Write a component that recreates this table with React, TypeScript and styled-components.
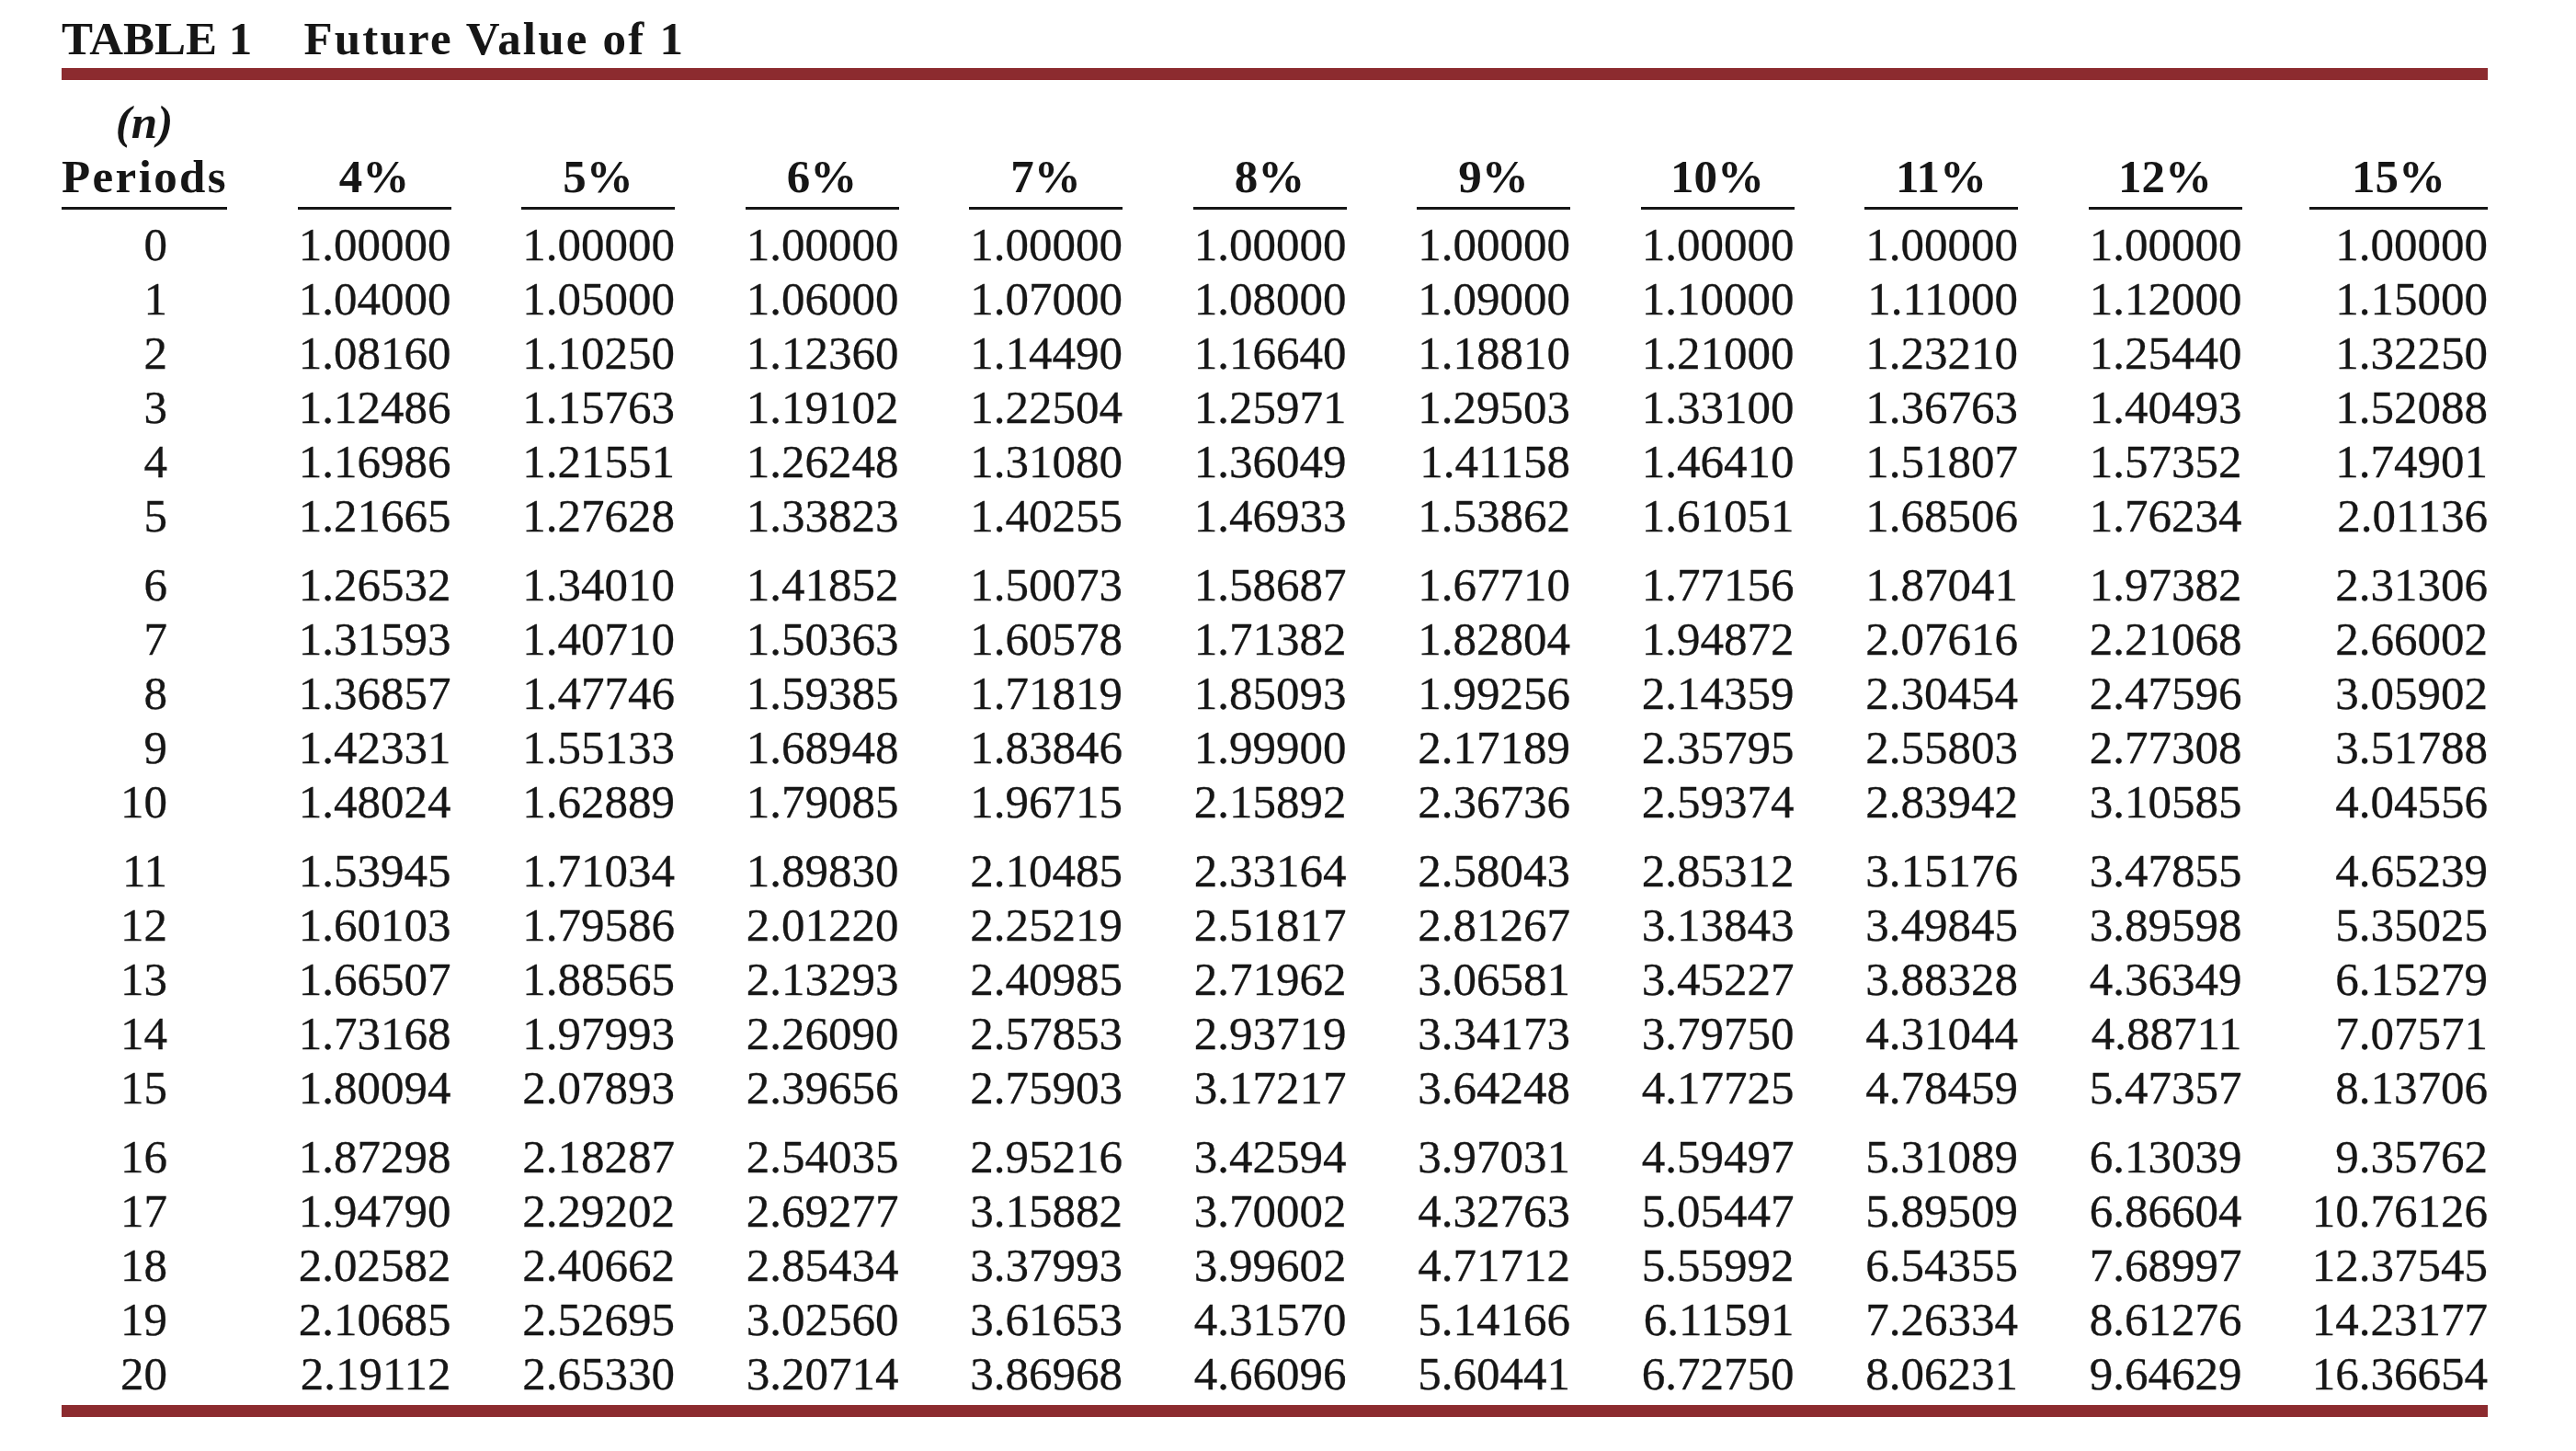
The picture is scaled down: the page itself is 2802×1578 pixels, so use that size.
import React from 'react';
import styled, { createGlobalStyle } from 'styled-components';

const GlobalStyle = createGlobalStyle`
  html, body {
    margin: 0;
    padding: 0;
    background: #ffffff;
  }
  body {
    font-family: 'Liberation Serif', 'Times New Roman', serif;
    color: #161616;
  }
`;

const COLUMNS = '180px repeat(9, 243.5px) 267.5px';

const Page = styled.div`
  width: 2802px;
  min-height: 1578px;
  box-sizing: border-box;
  padding: 13px 0 0 67px;
`;

const Sheet = styled.div`
  width: 2639px;
`;

const TitleLine = styled.h1`
  display: flex;
  gap: 56px;
  margin: 0;
  font-size: 51px;
  line-height: 59px;
  font-weight: 700;
`;

const TitleLabel = styled.span`
  letter-spacing: 0;
`;

const TitleText = styled.span`
  letter-spacing: 2.2px;
`;

const Rule = styled.div<{ $top: number }>`
  height: 13px;
  margin-top: ${(p) => p.$top}px;
  background: #8c2b2f;
`;

const HeaderRow = styled.div`
  display: grid;
  grid-template-columns: ${COLUMNS};
  align-items: end;
  margin: 17px 0 9px;
  font-size: 51px;
  line-height: 59px;
  font-weight: 700;
`;

const PeriodHead = styled.div`
  text-align: center;
  padding-bottom: 3px;
  border-bottom: 3px solid #161616;
`;

const NLabel = styled.div`
  font-style: italic;
`;

const PeriodsLabel = styled.div`
  letter-spacing: 2.4px;
`;

const RateCell = styled.div`
  display: flex;
  justify-content: flex-end;
`;

const RateLabel = styled.div<{ $wide?: boolean }>`
  width: ${(p) => (p.$wide ? 194 : 167)}px;
  text-align: center;
  padding-bottom: 3px;
  border-bottom: 3px solid #161616;
`;

const Row = styled.div<{ $groupStart?: boolean }>`
  display: grid;
  grid-template-columns: ${COLUMNS};
  margin-top: ${(p) => (p.$groupStart ? 16 : 0)}px;
  font-size: 51px;
  line-height: 59px;
  -webkit-text-stroke: 0.3px #161616;
`;

const Period = styled.div`
  text-align: right;
  padding-right: 65px;
`;

const Value = styled.div`
  text-align: right;
`;

const rates = ['4%', '5%', '6%', '7%', '8%', '9%', '10%', '11%', '12%', '15%'];

const values: string[][] = [
  ['1.00000', '1.00000', '1.00000', '1.00000', '1.00000', '1.00000', '1.00000', '1.00000', '1.00000', '1.00000'],
  ['1.04000', '1.05000', '1.06000', '1.07000', '1.08000', '1.09000', '1.10000', '1.11000', '1.12000', '1.15000'],
  ['1.08160', '1.10250', '1.12360', '1.14490', '1.16640', '1.18810', '1.21000', '1.23210', '1.25440', '1.32250'],
  ['1.12486', '1.15763', '1.19102', '1.22504', '1.25971', '1.29503', '1.33100', '1.36763', '1.40493', '1.52088'],
  ['1.16986', '1.21551', '1.26248', '1.31080', '1.36049', '1.41158', '1.46410', '1.51807', '1.57352', '1.74901'],
  ['1.21665', '1.27628', '1.33823', '1.40255', '1.46933', '1.53862', '1.61051', '1.68506', '1.76234', '2.01136'],
  ['1.26532', '1.34010', '1.41852', '1.50073', '1.58687', '1.67710', '1.77156', '1.87041', '1.97382', '2.31306'],
  ['1.31593', '1.40710', '1.50363', '1.60578', '1.71382', '1.82804', '1.94872', '2.07616', '2.21068', '2.66002'],
  ['1.36857', '1.47746', '1.59385', '1.71819', '1.85093', '1.99256', '2.14359', '2.30454', '2.47596', '3.05902'],
  ['1.42331', '1.55133', '1.68948', '1.83846', '1.99900', '2.17189', '2.35795', '2.55803', '2.77308', '3.51788'],
  ['1.48024', '1.62889', '1.79085', '1.96715', '2.15892', '2.36736', '2.59374', '2.83942', '3.10585', '4.04556'],
  ['1.53945', '1.71034', '1.89830', '2.10485', '2.33164', '2.58043', '2.85312', '3.15176', '3.47855', '4.65239'],
  ['1.60103', '1.79586', '2.01220', '2.25219', '2.51817', '2.81267', '3.13843', '3.49845', '3.89598', '5.35025'],
  ['1.66507', '1.88565', '2.13293', '2.40985', '2.71962', '3.06581', '3.45227', '3.88328', '4.36349', '6.15279'],
  ['1.73168', '1.97993', '2.26090', '2.57853', '2.93719', '3.34173', '3.79750', '4.31044', '4.88711', '7.07571'],
  ['1.80094', '2.07893', '2.39656', '2.75903', '3.17217', '3.64248', '4.17725', '4.78459', '5.47357', '8.13706'],
  ['1.87298', '2.18287', '2.54035', '2.95216', '3.42594', '3.97031', '4.59497', '5.31089', '6.13039', '9.35762'],
  ['1.94790', '2.29202', '2.69277', '3.15882', '3.70002', '4.32763', '5.05447', '5.89509', '6.86604', '10.76126'],
  ['2.02582', '2.40662', '2.85434', '3.37993', '3.99602', '4.71712', '5.55992', '6.54355', '7.68997', '12.37545'],
  ['2.10685', '2.52695', '3.02560', '3.61653', '4.31570', '5.14166', '6.11591', '7.26334', '8.61276', '14.23177'],
  ['2.19112', '2.65330', '3.20714', '3.86968', '4.66096', '5.60441', '6.72750', '8.06231', '9.64629', '16.36654'],
];

// periods 6, 11 and 16 open a new block of five
const isGroupStart = (n: number) => n > 1 && (n - 1) % 5 === 0;

const App: React.FC = () => (
  <>
    <GlobalStyle />
    <Page>
      <Sheet>
        <TitleLine>
          <TitleLabel>TABLE 1</TitleLabel>
          <TitleText>Future Value of 1</TitleText>
        </TitleLine>
        <Rule $top={2} />
        <HeaderRow>
          <PeriodHead>
            <NLabel>(n)</NLabel>
            <PeriodsLabel>Periods</PeriodsLabel>
          </PeriodHead>
          {rates.map((rate, i) => (
            <RateCell key={rate}>
              <RateLabel $wide={i === rates.length - 1}>{rate}</RateLabel>
            </RateCell>
          ))}
        </HeaderRow>
        {values.map((row, n) => (
          <Row key={n} $groupStart={isGroupStart(n)}>
            <Period>{n}</Period>
            {row.map((v, i) => (
              <Value key={i}>{v}</Value>
            ))}
          </Row>
        ))}
        <Rule $top={4} />
      </Sheet>
    </Page>
  </>
);

export default App;
